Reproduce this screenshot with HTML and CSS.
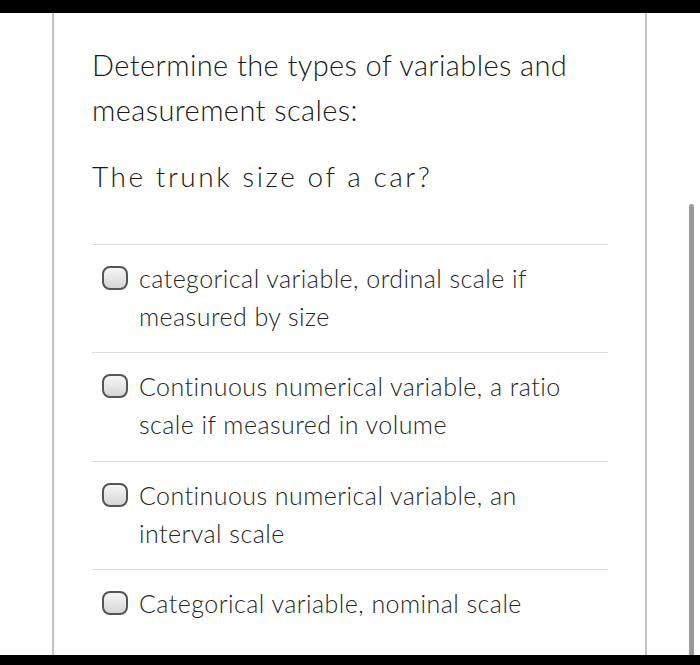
FILE: index.html
```html
<!DOCTYPE html>
<html>
<head>
<meta charset="utf-8">
<link rel="stylesheet" href="styles.css">
</head>
<body>
<div class="screen">
  <div class="bar-top"></div>
  <div class="middle">
    <div class="gutter"></div>
    <main class="panel">
      <p class="prompt">Determine the types of variables and measurement scales:</p>
      <p class="question">The trunk size of a car?</p>
      <ul class="options">
        <li class="option"><span class="radio"></span><span class="label">categorical variable, ordinal scale if measured by size</span></li>
        <li class="option"><span class="radio"></span><span class="label">Continuous numerical variable, a ratio scale if measured in volume</span></li>
        <li class="option"><span class="radio"></span><span class="label">Continuous numerical variable, an interval scale</span></li>
        <li class="option"><span class="radio"></span><span class="label">Categorical variable, nominal scale</span></li>
      </ul>
    </main>
    <div class="gutter right"></div>
    <div class="scrollbar"></div>
  </div>
  <div class="bar-bottom"></div>
</div>
</body>
</html>
```
FILE: styles.css
```css
* { box-sizing: border-box; }
html, body { margin: 0; padding: 0; background: #fff; }
body { font-family: "Lato", "Liberation Sans", sans-serif; color: #222; }
.screen { width: 700px; height: 665px; display: flex; flex-direction: column; overflow: hidden; }
.bar-top { height: 13px; background: #000; flex: none; }
.bar-bottom { height: 10px; background: #000; flex: none; }
.middle { flex: 1; display: flex; position: relative; overflow: hidden; }
.gutter { width: 54px; flex: none; border-right: 2px solid #c4c4c4; }
.gutter.right { width: 55px; border-right: none; border-left: 2px solid #c4c4c4; }
.panel { width: 591px; flex: none; padding: 29px 37px 0 38px; }
.prompt { margin: 0; font-size: 29px; line-height: 45px; font-weight: 300; color: #1a1a1a; letter-spacing: 0.4px; }
.question { margin: 22px 0 0; font-size: 28px; line-height: 45px; font-weight: 300; color: #1a1a1a; letter-spacing: 2.55px; }
.options { list-style: none; margin: 45px 0 0; padding: 0; }
.option { display: flex; align-items: flex-start; gap: 11px; border-top: 1px solid #dcdcdc; padding: 14px 0 17px 10px; }
.option:nth-child(2) { padding-bottom: 18px; }
.radio { flex: none; width: 26px; height: 24px; margin-top: 7px; border: 2px solid #555; border-radius: 8px; background: linear-gradient(#f6f6f6, #d6d6d6); }
.label { font-size: 25px; line-height: 38px; font-weight: 300; color: #262626; letter-spacing: 0.45px; padding-right: 14px; }
.scrollbar { position: absolute; left: 689px; top: 191px; width: 5px; bottom: 0; background: #9a9a9a; border-radius: 3px 3px 0 0; }
```
